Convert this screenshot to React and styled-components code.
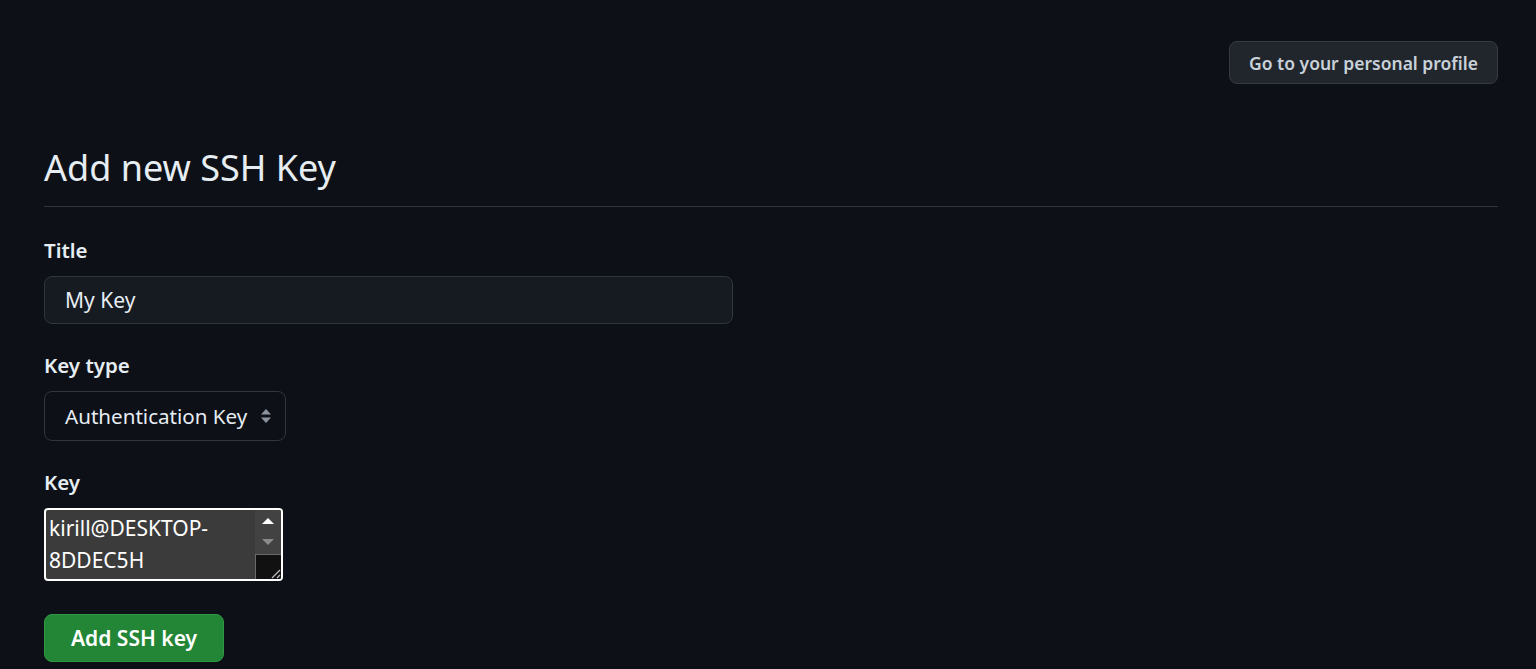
import React from 'react';
import styled, { createGlobalStyle } from 'styled-components';

const GlobalStyle = createGlobalStyle`
    html, body {
        margin: 0;
        padding: 0;
        background: #0d1117;
    }
    body {
        font-family: "Noto Sans", "Open Sans", sans-serif;
        color: #e6edf3;
    }
`;

const Page = styled.div`
    min-height: 669px;
    padding: 41px 38px 0 44px;
    box-sizing: border-box;
`;

const TopBar = styled.div`
    display: flex;
    justify-content: flex-end;
`;

const ProfileBtn = styled.button`
    height: 43px;
    padding: 0 19px;
    background: #21262d;
    border: 1px solid #363b42;
    border-radius: 8px;
    color: #c9d1d9;
    font-family: inherit;
    font-size: 17.5px;
    font-weight: 600;
    cursor: pointer;
`;

const Subhead = styled.div`
    margin-top: 61px;
    padding-bottom: 16px;
    border-bottom: 1px solid #30363d;
`;

const Heading = styled.h2`
    margin: 0;
    font-size: 36px;
    font-weight: 400;
    line-height: 45px;
    color: #e6edf3;
`;

const Form = styled.form`
    display: flex;
    flex-direction: column;
    align-items: flex-start;
    padding-top: 28px;
`;

const Group = styled.div`
    display: flex;
    flex-direction: column;
    align-items: flex-start;
    gap: 10px;
    margin-bottom: ${p => p.last ? '33px' : '26px'};
`;

const Label = styled.label`
    font-size: 20.5px;
    font-weight: 600;
    line-height: 31px;
    color: #e6edf3;
`;

const Input = styled.input`
    width: 689px;
    height: 48px;
    box-sizing: border-box;
    padding: 0 20px;
    background: #161b22;
    border: 1px solid #30363d;
    border-radius: 8px;
    color: #e6edf3;
    font-family: inherit;
    font-size: 21px;
    outline: none;
`;

const SelectBox = styled.div`
    position: relative;
    display: flex;
    align-items: center;
    height: 50px;
    box-sizing: border-box;
    padding: 0 38px 0 20px;
    background: #0d1117;
    border: 1px solid #30363d;
    border-radius: 8px;
    font-size: 20.6px;
    color: #e6edf3;
`;

const Caret = styled.svg`
    position: absolute;
    right: 13px;
    top: 50%;
    transform: translateY(-50%);
`;

const KeyBox = styled.div`
    display: flex;
    width: 239px;
    height: 73px;
    box-sizing: border-box;
    border: 2px solid #ffffff;
    border-radius: 4px;
    background: #3b3b3b;
    overflow: hidden;
`;

const KeyArea = styled.textarea`
    flex: 1;
    min-width: 0;
    margin: 0;
    padding: 2px 3px;
    background: transparent;
    border: none;
    outline: none;
    resize: none;
    overflow: hidden;
    color: #ffffff;
    font-family: inherit;
    font-size: 21px;
    line-height: 32px;
`;

const Rail = styled.div`
    display: flex;
    flex-direction: column;
    width: 26px;
    background: #424242;
`;

const ArrowCell = styled.div`
    display: flex;
    align-items: center;
    justify-content: center;
    height: 21px;
`;

const Arrow = styled.div`
    width: 0;
    height: 0;
    border-left: 6px solid transparent;
    border-right: 6px solid transparent;
    ${p => p.down
        ? `border-top: 6px solid ${p.color};`
        : `border-bottom: 6px solid ${p.color};`}
`;

const Corner = styled.div`
    margin-top: auto;
    height: 25px;
    box-sizing: border-box;
    background: #111111;
    border-top: 1px solid #6a6a6a;
    border-left: 1px solid #6a6a6a;
    display: flex;
    align-items: flex-end;
    justify-content: flex-end;
`;

const SubmitBtn = styled.button`
    height: 48px;
    padding: 0 26px;
    background: #238636;
    border: 1px solid #2d9a42;
    border-radius: 8px;
    color: #ffffff;
    font-family: inherit;
    font-size: 21px;
    font-weight: 600;
    cursor: pointer;
`;

class App extends React.Component {
    render() {
        return (
            <Page>
                <GlobalStyle />
                <TopBar>
                    <ProfileBtn type='button'>Go to your personal profile</ProfileBtn>
                </TopBar>
                <Subhead>
                    <Heading>Add new SSH Key</Heading>
                </Subhead>
                <Form onSubmit={e => e.preventDefault()}>
                    <Group>
                        <Label>Title</Label>
                        <Input type='text' defaultValue='My Key' />
                    </Group>
                    <Group>
                        <Label>Key type</Label>
                        <SelectBox>
                            Authentication Key
                            <Caret width='12' height='16' viewBox='0 0 12 16'>
                                <path d='M6 1 L11 6.5 H1 Z' fill='#8b949e' />
                                <path d='M6 15 L11 9.5 H1 Z' fill='#8b949e' />
                            </Caret>
                        </SelectBox>
                    </Group>
                    <Group last>
                        <Label>Key</Label>
                        <KeyBox>
                            <KeyArea defaultValue={'kirill@DESKTOP-\n8DDEC5H'} />
                            <Rail>
                                <ArrowCell><Arrow color='#ffffff' /></ArrowCell>
                                <ArrowCell><Arrow down color='#8a8a8a' /></ArrowCell>
                                <Corner>
                                    <svg width='14' height='14' viewBox='0 0 14 14'>
                                        <path d='M13 5 L5 13 M13 10 L10 13' stroke='#bbbbbb' strokeWidth='1.3' />
                                    </svg>
                                </Corner>
                            </Rail>
                        </KeyBox>
                    </Group>
                    <SubmitBtn type='submit'>Add SSH key</SubmitBtn>
                </Form>
            </Page>
        )
    }
}

export default App
